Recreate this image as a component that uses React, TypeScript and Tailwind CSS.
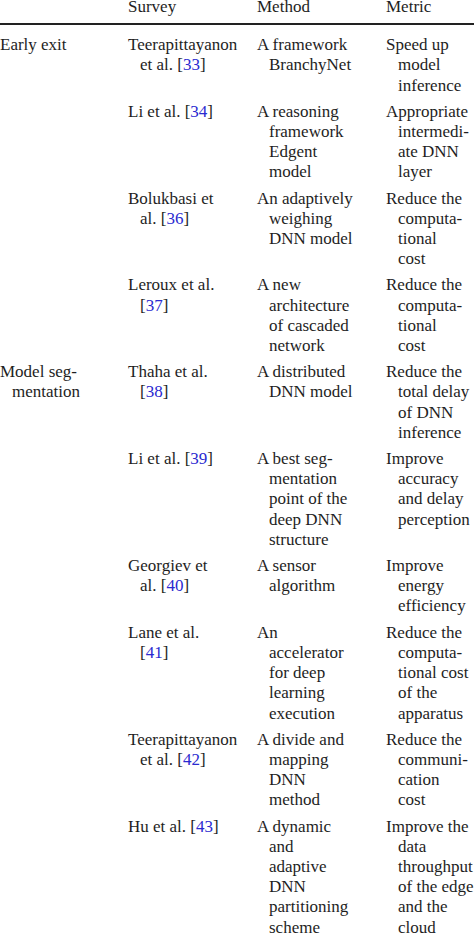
const rows: string[][][] = [
  [["Early exit"], ["Teerapittayanon", "et al. [33]"], ["A framework", "BranchyNet"], ["Speed up", "model", "inference"]],
  [[], ["Li et al. [34]"], ["A reasoning", "framework", "Edgent", "model"], ["Appropriate", "intermedi-", "ate DNN", "layer"]],
  [[], ["Bolukbasi et", "al. [36]"], ["An adaptively", "weighing", "DNN model"], ["Reduce the", "computa-", "tional", "cost"]],
  [[], ["Leroux et al.", "[37]"], ["A new", "architecture", "of cascaded", "network"], ["Reduce the", "computa-", "tional", "cost"]],
  [["Model seg-", "mentation"], ["Thaha et al.", "[38]"], ["A distributed", "DNN model"], ["Reduce the", "total delay", "of DNN", "inference"]],
  [[], ["Li et al. [39]"], ["A best seg-", "mentation", "point of the", "deep DNN", "structure"], ["Improve", "accuracy", "and delay", "perception"]],
  [[], ["Georgiev et", "al. [40]"], ["A sensor", "algorithm"], ["Improve", "energy", "efficiency"]],
  [[], ["Lane et al.", "[41]"], ["An", "accelerator", "for deep", "learning", "execution"], ["Reduce the", "computa-", "tional cost", "of the", "apparatus"]],
  [[], ["Teerapittayanon", "et al. [42]"], ["A divide and", "mapping", "DNN", "method"], ["Reduce the", "communi-", "cation", "cost"]],
  [[], ["Hu et al. [43]"], ["A dynamic", "and", "adaptive", "DNN", "partitioning", "scheme"], ["Improve the", "data", "throughput", "of the edge", "and the", "cloud"]],
]

// citation numbers are blue, brackets stay black
function renderLine(line: string) {
  const parts = line.split(/\[(\d+)\]/)
  return parts.map((p, i) =>
    i % 2 === 1 ? (
      <span key={i}>
        [<span className="text-[#2a2ad0]">{p}</span>]
      </span>
    ) : (
      <span key={i}>{p}</span>
    )
  )
}

function Cell({ lines }: { lines: string[] }) {
  return (
    <div className="whitespace-nowrap">
      {lines.map((l, i) => (
        <div key={i} className={i > 0 ? "pl-[12px]" : ""}>
          {renderLine(l)}
        </div>
      ))}
    </div>
  )
}

export default function App() {
  const cols = "grid grid-cols-[128px_129px_129px_1fr]"

  return (
    <div className="w-[474px] h-[935px] overflow-hidden bg-white text-[#1e1e1e] font-[family-name:'Liberation_Serif',serif] text-[17px] leading-[20.2px]">
      <div className={`${cols} -mt-[3px]`}>
        <div></div>
        <div>Survey</div>
        <div>Method</div>
        <div>Metric</div>
      </div>
      <div className="mt-[6px] h-[2px] bg-[#222]" />
      <div className="mt-[10px] flex flex-col gap-[6px]">
        {rows.map((r, i) => (
          <div key={i} className={cols}>
            {r.map((c, j) => (
              <Cell key={j} lines={c} />
            ))}
          </div>
        ))}
      </div>
    </div>
  )
}
